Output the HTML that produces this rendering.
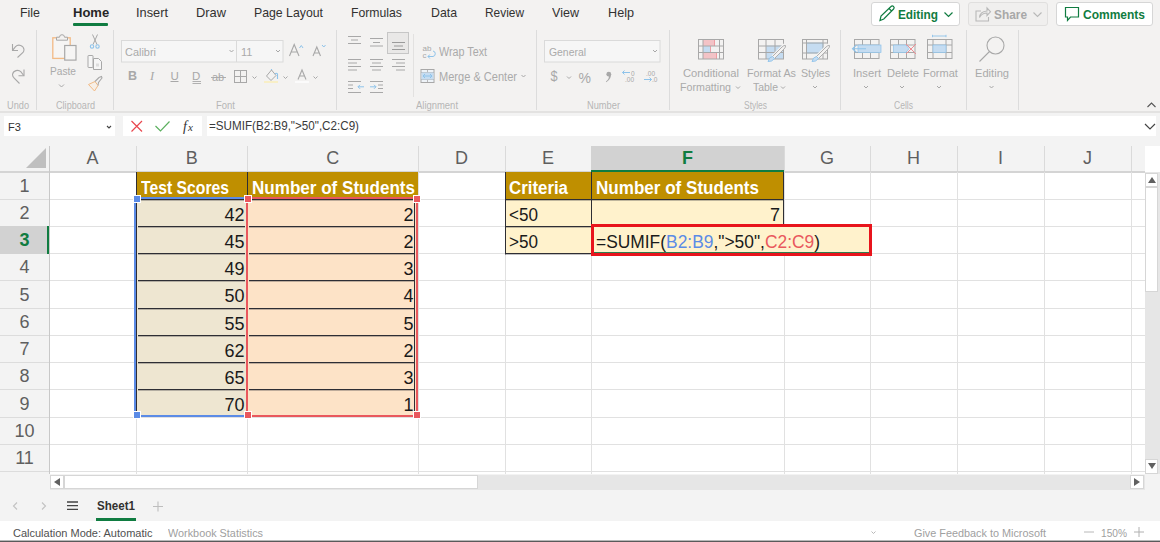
<!DOCTYPE html>
<html><head><meta charset="utf-8"><style>
html,body{margin:0;padding:0;width:1160px;height:542px;overflow:hidden;background:#fff;font-family:'Liberation Sans', sans-serif;}
#root{position:relative;width:1160px;height:542px;overflow:hidden;}
</style></head><body><div id="root">
<div style="position:absolute;left:0px;top:0px;width:1160px;height:113px;background:#f3f2f1"></div>
<div style="position:absolute;left:0px;top:111px;width:1160px;height:2px;background:#e3e2e1"></div>
<div style="position:absolute;left:0px;top:113px;width:1160px;height:33px;background:#f3f3f3"></div>
<div style="position:absolute;left:73px;top:23px;width:35px;height:3px;background:#107c41;border-radius:1px"></div>
<div style="position:absolute;left:36px;top:30px;width:1px;height:80px;background:#dcdcdc"></div>
<div style="position:absolute;left:113px;top:30px;width:1px;height:80px;background:#dcdcdc"></div>
<div style="position:absolute;left:336px;top:30px;width:1px;height:80px;background:#dcdcdc"></div>
<div style="position:absolute;left:536px;top:30px;width:1px;height:80px;background:#dcdcdc"></div>
<div style="position:absolute;left:669px;top:30px;width:1px;height:80px;background:#dcdcdc"></div>
<div style="position:absolute;left:840px;top:30px;width:1px;height:80px;background:#dcdcdc"></div>
<div style="position:absolute;left:966px;top:30px;width:1px;height:80px;background:#dcdcdc"></div>
<div style="position:absolute;left:1018px;top:30px;width:1px;height:80px;background:#dcdcdc"></div>
<div style="position:absolute;left:871px;top:2px;width:89px;height:24px;box-sizing:border-box;background:#fff;border:1px solid #d6d6d6;border-radius:3px"></div>
<div style="position:absolute;left:968px;top:2px;width:80px;height:24px;box-sizing:border-box;background:#f0efee;border:1px solid #e0dfde;border-radius:3px"></div>
<div style="position:absolute;left:1056px;top:2px;width:97px;height:24px;box-sizing:border-box;background:#fff;border:1px solid #d6d6d6;border-radius:3px"></div>
<div style="position:absolute;left:4px;top:116px;width:111px;height:20px;background:#fff"></div>
<div style="position:absolute;left:123px;top:116px;width:79px;height:20px;background:#fff"></div>
<div style="position:absolute;left:207px;top:116px;width:949px;height:20px;background:#fff"></div>
<div style="position:absolute;left:0px;top:146px;width:1145px;height:26px;background:#f3f3f3"></div>
<div style="position:absolute;left:0px;top:172px;width:49px;height:302px;background:#f3f3f3"></div>
<div style="position:absolute;left:50px;top:172px;width:1095px;height:302px;background:#fff"></div>
<div style="position:absolute;left:136px;top:146px;width:1px;height:26px;background:#dadada"></div>
<div style="position:absolute;left:247px;top:146px;width:1px;height:26px;background:#dadada"></div>
<div style="position:absolute;left:418px;top:146px;width:1px;height:26px;background:#dadada"></div>
<div style="position:absolute;left:505px;top:146px;width:1px;height:26px;background:#dadada"></div>
<div style="position:absolute;left:591px;top:146px;width:1px;height:26px;background:#dadada"></div>
<div style="position:absolute;left:784px;top:146px;width:1px;height:26px;background:#dadada"></div>
<div style="position:absolute;left:870px;top:146px;width:1px;height:26px;background:#dadada"></div>
<div style="position:absolute;left:957px;top:146px;width:1px;height:26px;background:#dadada"></div>
<div style="position:absolute;left:1044px;top:146px;width:1px;height:26px;background:#dadada"></div>
<div style="position:absolute;left:1131px;top:146px;width:1px;height:26px;background:#dadada"></div>
<div style="position:absolute;left:0px;top:171px;width:1145px;height:2px;background:#d4d4d4"></div>
<div style="position:absolute;left:49px;top:146px;width:1px;height:328px;background:#c8c8c8"></div>
<div style="position:absolute;left:136px;top:172px;width:1px;height:302px;background:#e1e1e1"></div>
<div style="position:absolute;left:247px;top:172px;width:1px;height:302px;background:#e1e1e1"></div>
<div style="position:absolute;left:418px;top:172px;width:1px;height:302px;background:#e1e1e1"></div>
<div style="position:absolute;left:505px;top:172px;width:1px;height:302px;background:#e1e1e1"></div>
<div style="position:absolute;left:591px;top:172px;width:1px;height:302px;background:#e1e1e1"></div>
<div style="position:absolute;left:784px;top:172px;width:1px;height:302px;background:#e1e1e1"></div>
<div style="position:absolute;left:870px;top:172px;width:1px;height:302px;background:#e1e1e1"></div>
<div style="position:absolute;left:957px;top:172px;width:1px;height:302px;background:#e1e1e1"></div>
<div style="position:absolute;left:1044px;top:172px;width:1px;height:302px;background:#e1e1e1"></div>
<div style="position:absolute;left:1131px;top:172px;width:1px;height:302px;background:#e1e1e1"></div>
<div style="position:absolute;left:50px;top:199px;width:1095px;height:1px;background:#e1e1e1"></div>
<div style="position:absolute;left:0px;top:199px;width:49px;height:1px;background:#dcdcdc"></div>
<div style="position:absolute;left:50px;top:226px;width:1095px;height:1px;background:#e1e1e1"></div>
<div style="position:absolute;left:0px;top:226px;width:49px;height:1px;background:#dcdcdc"></div>
<div style="position:absolute;left:50px;top:253px;width:1095px;height:1px;background:#e1e1e1"></div>
<div style="position:absolute;left:0px;top:253px;width:49px;height:1px;background:#dcdcdc"></div>
<div style="position:absolute;left:50px;top:280px;width:1095px;height:1px;background:#e1e1e1"></div>
<div style="position:absolute;left:0px;top:280px;width:49px;height:1px;background:#dcdcdc"></div>
<div style="position:absolute;left:50px;top:308px;width:1095px;height:1px;background:#e1e1e1"></div>
<div style="position:absolute;left:0px;top:308px;width:49px;height:1px;background:#dcdcdc"></div>
<div style="position:absolute;left:50px;top:335px;width:1095px;height:1px;background:#e1e1e1"></div>
<div style="position:absolute;left:0px;top:335px;width:49px;height:1px;background:#dcdcdc"></div>
<div style="position:absolute;left:50px;top:362px;width:1095px;height:1px;background:#e1e1e1"></div>
<div style="position:absolute;left:0px;top:362px;width:49px;height:1px;background:#dcdcdc"></div>
<div style="position:absolute;left:50px;top:389px;width:1095px;height:1px;background:#e1e1e1"></div>
<div style="position:absolute;left:0px;top:389px;width:49px;height:1px;background:#dcdcdc"></div>
<div style="position:absolute;left:50px;top:417px;width:1095px;height:1px;background:#e1e1e1"></div>
<div style="position:absolute;left:0px;top:417px;width:49px;height:1px;background:#dcdcdc"></div>
<div style="position:absolute;left:50px;top:444px;width:1095px;height:1px;background:#e1e1e1"></div>
<div style="position:absolute;left:0px;top:444px;width:49px;height:1px;background:#dcdcdc"></div>
<div style="position:absolute;left:50px;top:471px;width:1095px;height:1px;background:#e1e1e1"></div>
<div style="position:absolute;left:0px;top:471px;width:49px;height:1px;background:#dcdcdc"></div>
<div style="position:absolute;left:591px;top:146px;width:193px;height:25px;background:#d2d2d2"></div>
<div style="position:absolute;left:591px;top:170px;width:193px;height:2px;background:#107c41"></div>
<div style="position:absolute;left:0px;top:226px;width:49px;height:28px;background:#d2d2d2"></div>
<div style="position:absolute;left:47px;top:226px;width:2px;height:28px;background:#107c41"></div>
<svg style="position:absolute;left:26px;top:148px" width="21" height="21"><path d="M20 0 L20 20 L0 20 Z" fill="#bfbfbf"/></svg>
<div style="position:absolute;left:136px;top:172px;width:282px;height:27px;background:#bf8f00"></div>
<div style="position:absolute;left:505px;top:172px;width:279px;height:27px;background:#bf8f00"></div>
<div style="position:absolute;left:505px;top:199px;width:279px;height:55px;background:#fff2cc"></div>
<div style="position:absolute;left:137px;top:199px;width:110px;height:218px;background:#eee6d1"></div>
<div style="position:absolute;left:248px;top:199px;width:170px;height:218px;background:#fde3c7"></div>
<div style="position:absolute;left:136px;top:199px;width:282px;height:1px;background:#2e2e34;box-shadow:0 1px 0 rgba(46,46,52,0.3)"></div>
<div style="position:absolute;left:138px;top:226px;width:107px;height:1px;background:#2e2e34;box-shadow:0 1px 0 rgba(46,46,52,0.3)"></div>
<div style="position:absolute;left:249px;top:226px;width:166px;height:1px;background:#2e2e34;box-shadow:0 1px 0 rgba(46,46,52,0.3)"></div>
<div style="position:absolute;left:138px;top:253px;width:107px;height:1px;background:#2e2e34;box-shadow:0 1px 0 rgba(46,46,52,0.3)"></div>
<div style="position:absolute;left:249px;top:253px;width:166px;height:1px;background:#2e2e34;box-shadow:0 1px 0 rgba(46,46,52,0.3)"></div>
<div style="position:absolute;left:138px;top:280px;width:107px;height:1px;background:#2e2e34;box-shadow:0 1px 0 rgba(46,46,52,0.3)"></div>
<div style="position:absolute;left:249px;top:280px;width:166px;height:1px;background:#2e2e34;box-shadow:0 1px 0 rgba(46,46,52,0.3)"></div>
<div style="position:absolute;left:138px;top:308px;width:107px;height:1px;background:#2e2e34;box-shadow:0 1px 0 rgba(46,46,52,0.3)"></div>
<div style="position:absolute;left:249px;top:308px;width:166px;height:1px;background:#2e2e34;box-shadow:0 1px 0 rgba(46,46,52,0.3)"></div>
<div style="position:absolute;left:138px;top:335px;width:107px;height:1px;background:#2e2e34;box-shadow:0 1px 0 rgba(46,46,52,0.3)"></div>
<div style="position:absolute;left:249px;top:335px;width:166px;height:1px;background:#2e2e34;box-shadow:0 1px 0 rgba(46,46,52,0.3)"></div>
<div style="position:absolute;left:138px;top:362px;width:107px;height:1px;background:#2e2e34;box-shadow:0 1px 0 rgba(46,46,52,0.3)"></div>
<div style="position:absolute;left:249px;top:362px;width:166px;height:1px;background:#2e2e34;box-shadow:0 1px 0 rgba(46,46,52,0.3)"></div>
<div style="position:absolute;left:138px;top:389px;width:107px;height:1px;background:#2e2e34;box-shadow:0 1px 0 rgba(46,46,52,0.3)"></div>
<div style="position:absolute;left:249px;top:389px;width:166px;height:1px;background:#2e2e34;box-shadow:0 1px 0 rgba(46,46,52,0.3)"></div>
<div style="position:absolute;left:136px;top:172px;width:1px;height:245px;background:#2e2e34;box-shadow:0 1px 0 rgba(46,46,52,0.3)"></div>
<div style="position:absolute;left:247px;top:172px;width:1px;height:245px;background:#2e2e34;box-shadow:0 1px 0 rgba(46,46,52,0.3)"></div>
<div style="position:absolute;left:414px;top:199px;width:1px;height:218px;background:#2e2e34;box-shadow:0 1px 0 rgba(46,46,52,0.3)"></div>
<div style="position:absolute;left:505px;top:199px;width:279px;height:1px;background:#2e2e34;box-shadow:0 1px 0 rgba(46,46,52,0.3)"></div>
<div style="position:absolute;left:505px;top:226px;width:279px;height:1px;background:#2e2e34;box-shadow:0 1px 0 rgba(46,46,52,0.3)"></div>
<div style="position:absolute;left:505px;top:253px;width:86px;height:1px;background:#2e2e34;box-shadow:0 1px 0 rgba(46,46,52,0.3)"></div>
<div style="position:absolute;left:505px;top:172px;width:1px;height:82px;background:#2e2e34;box-shadow:0 1px 0 rgba(46,46,52,0.3)"></div>
<div style="position:absolute;left:591px;top:172px;width:1px;height:82px;background:#2e2e34;box-shadow:0 1px 0 rgba(46,46,52,0.3)"></div>
<div style="position:absolute;left:783px;top:172px;width:1px;height:52px;background:#2e2e34;box-shadow:0 1px 0 rgba(46,46,52,0.3)"></div>
<div style="position:absolute;left:591px;top:226px;width:279px;height:28px;background:#fff2cc"></div>
<div style="position:absolute;left:594px;top:252px;width:275px;height:1px;background:#2e7d4f"></div>
<div style="position:absolute;left:134px;top:197px;width:114px;height:2px;background:#5b8be6"></div>
<div style="position:absolute;left:134px;top:197px;width:2px;height:220px;background:#5b8be6"></div>
<div style="position:absolute;left:134px;top:415px;width:114px;height:2px;background:#5b8be6"></div>
<div style="position:absolute;left:246px;top:197px;width:172px;height:2px;background:#e9585d"></div>
<div style="position:absolute;left:246px;top:197px;width:2px;height:220px;background:#e9585d"></div>
<div style="position:absolute;left:416px;top:197px;width:2px;height:220px;background:#e9585d"></div>
<div style="position:absolute;left:246px;top:415px;width:172px;height:2px;background:#e9585d"></div>
<div style="position:absolute;left:132.5px;top:195px;width:8px;height:8px;box-sizing:border-box;background:#5b8be6;border:1px solid #fff"></div>
<div style="position:absolute;left:132.5px;top:411px;width:8px;height:8px;box-sizing:border-box;background:#5b8be6;border:1px solid #fff"></div>
<div style="position:absolute;left:243.5px;top:195px;width:8px;height:8px;box-sizing:border-box;background:#e9585d;border:1px solid #fff"></div>
<div style="position:absolute;left:412.5px;top:195px;width:8px;height:8px;box-sizing:border-box;background:#e9585d;border:1px solid #fff"></div>
<div style="position:absolute;left:243.5px;top:411px;width:8px;height:8px;box-sizing:border-box;background:#e9585d;border:1px solid #fff"></div>
<div style="position:absolute;left:412.5px;top:411px;width:8px;height:8px;box-sizing:border-box;background:#e9585d;border:1px solid #fff"></div>
<div style="position:absolute;left:591px;top:224px;width:281px;height:32px;box-sizing:border-box;border:3px solid #e8141c"></div>
<div style="position:absolute;left:1145px;top:172px;width:15px;height:302px;background:#e6e6e6"></div>
<div style="position:absolute;left:1145px;top:173px;width:13px;height:14px;box-sizing:border-box;background:#fff;border:1px solid #d6d6d6"></div>
<div style="position:absolute;left:1145px;top:187px;width:13px;height:105px;box-sizing:border-box;background:#fff;border:1px solid #d6d6d6"></div>
<div style="position:absolute;left:1145px;top:459px;width:13px;height:15px;box-sizing:border-box;background:#fff;border:1px solid #d6d6d6"></div>
<div style="position:absolute;left:0px;top:474px;width:1160px;height:47px;background:#f3f3f3"></div>
<div style="position:absolute;left:50px;top:475px;width:1095px;height:15px;background:#e6e6e6"></div>
<div style="position:absolute;left:50px;top:475px;width:14px;height:14px;box-sizing:border-box;background:#fff;border:1px solid #d6d6d6"></div>
<div style="position:absolute;left:64px;top:475px;width:414px;height:14px;box-sizing:border-box;background:#fff;border:1px solid #d6d6d6"></div>
<div style="position:absolute;left:1130px;top:475px;width:14px;height:14px;box-sizing:border-box;background:#fff;border:1px solid #d6d6d6"></div>
<svg style="position:absolute;left:1148px;top:176px" width="8" height="8"><path d="M0 7 L4 1 L8 7Z" fill="#606060"/></svg>
<svg style="position:absolute;left:1148px;top:462px" width="8" height="8"><path d="M0 1 L4 7 L8 1Z" fill="#606060"/></svg>
<svg style="position:absolute;left:53px;top:478px" width="8" height="8"><path d="M7 0 L1 4 L7 8Z" fill="#606060"/></svg>
<svg style="position:absolute;left:1133px;top:478px" width="8" height="8"><path d="M1 0 L7 4 L1 8Z" fill="#606060"/></svg>
<div style="position:absolute;left:96px;top:518px;width:40px;height:3px;background:#107c41"></div>
<div style="position:absolute;left:0px;top:521px;width:1160px;height:21px;background:#fff"></div>
<div style="position:absolute;left:0px;top:540px;width:1160px;height:1px;background:#b8b8b8"></div>
<div style="position:absolute;left:0px;top:541px;width:1160px;height:1px;background:#5a5a5a"></div>
<svg style="position:absolute;left:0;top:0" width="1160" height="113"><path d="M12.5 44 V50.5 H18" fill="none" stroke="#a8a8a8" stroke-width="1.1"/><path d="M12.8 50.2 L15.5 46.6 A5 5 0 0 1 24 49.5 A5 5 0 0 1 23 52.5 L17.5 57.5" fill="none" stroke="#a8a8a8" stroke-width="1.1"/><path d="M24 69.5 V75.8 H18.5" fill="none" stroke="#a8a8a8" stroke-width="1.1"/><path d="M23.7 75.5 L21 71.9 A5 5 0 0 0 12.5 74.5 A5 5 0 0 0 13.5 77.3 L19.5 83.5" fill="none" stroke="#a8a8a8" stroke-width="1.1"/><rect x="52.8" y="37.8" width="17.4" height="20.6" fill="#f6f5f4" stroke="#f2bb86" stroke-width="1.3"/><path d="M56.5 40.2 V37.2 H59.5 A2.5 2.5 0 0 1 64.5 37.2 H67.5 V40.2 Z" fill="#f3f2f1" stroke="#a8a8a8" stroke-width="1"/><rect x="64.7" y="45.5" width="11.3" height="14.6" fill="#f6f5f4" stroke="#a8a8a8" stroke-width="1.2"/><path d="M59 84.5 L61.5 87 L64 84.5" fill="none" stroke="#a8a8a8" stroke-width="1"/><path d="M92.5 34.5 L97 44.5 M97.5 34.5 L93 44.5" fill="none" stroke="#a8a8a8" stroke-width="1"/><circle cx="92" cy="46.5" r="1.7" fill="none" stroke="#8ec3ea" stroke-width="1.1"/><circle cx="97.5" cy="46.5" r="1.7" fill="none" stroke="#8ec3ea" stroke-width="1.1"/><rect x="88" y="55.5" width="5" height="12" rx="0.5" fill="#f6f6f6" stroke="#a8a8a8" stroke-width="1"/><path d="M93.5 58.5 H98.5 L101.5 61.5 V69.5 H93.5 Z" fill="#f6f6f6" stroke="#a8a8a8" stroke-width="1"/><rect x="96" y="63.5" width="3" height="3" fill="#dddddd"/><path d="M88.5 84.5 L95 81.5 L98 85.5 L94.5 91 Z" fill="#f7efe6" stroke="#f2bb86" stroke-width="1"/><path d="M95 81.5 L97 79.5 L99 77.5 L101.5 76.5 L102 78 L100 80.5 L98.5 82.5 L98 85.5" fill="none" stroke="#a8a8a8" stroke-width="1.1"/><rect x="121.5" y="40.5" width="161.5" height="21.5" fill="#f6f6f6" stroke="#dadada" stroke-width="1"/><line x1="236.5" y1="40.5" x2="236.5" y2="62" stroke="#dadada" stroke-width="1"/><path d="M229.5 50 L231.5 52 L233.5 50 M276 50 L278 52 L280 50" fill="none" stroke="#a8a8a8" stroke-width="1"/><path d="M289.5 56 L294.2 44.5 L299 56 M291.3 52 H297.2" fill="none" stroke="#a8a8a8" stroke-width="1.1"/><path d="M299.5 48 L301.3 45.5 L303 48" fill="none" stroke="#8ec3ea" stroke-width="1"/><path d="M313 56 L316.8 47 L320.5 56 M314.4 53 H319.2" fill="none" stroke="#a8a8a8" stroke-width="1.1"/><path d="M322 45 L323.8 47 L325.5 45" fill="none" stroke="#8ec3ea" stroke-width="1"/><text x="128" y="80" font-family="Liberation Sans" font-weight="bold" font-size="12.5" fill="#a8a8a8">B</text><text x="150" y="80" font-family="Liberation Serif" font-style="italic" font-size="12.5" fill="#a8a8a8">I</text><text x="170.5" y="79.5" font-family="Liberation Sans" font-size="11.5" fill="#a8a8a8">U</text><line x1="170.5" y1="81.5" x2="178.5" y2="81.5" stroke="#a8a8a8" stroke-width="1"/><text x="192" y="79.5" font-family="Liberation Sans" font-size="11.5" fill="#a8a8a8">D</text><path d="M192.5 81.5 H201 M192.5 83.5 H201" stroke="#a8a8a8" stroke-width="0.9"/><text x="212" y="80.5" font-family="Liberation Sans" font-size="11" fill="#a8a8a8">ab</text><line x1="211" y1="77.5" x2="226" y2="77.5" stroke="#a8a8a8" stroke-width="0.9"/><rect x="234.5" y="70.5" width="12" height="12" fill="none" stroke="#a8a8a8" stroke-width="1"/><path d="M240.5 70.5 V82.5 M234.5 76.5 H246.5" stroke="#a8a8a8" stroke-width="1"/><path d="M252.5 76.5 L254.5 78.5 L256.5 76.5" fill="none" stroke="#a8a8a8" stroke-width="1"/><path d="M283.5 76.5 L285.5 78.5 L287.5 76.5" fill="none" stroke="#a8a8a8" stroke-width="1"/><path d="M313.5 76.5 L315.5 78.5 L317.5 76.5" fill="none" stroke="#a8a8a8" stroke-width="1"/><path d="M266.5 76 L271.5 70 L276 75.5 L271 80.5 Z" fill="none" stroke="#a8a8a8" stroke-width="1"/><path d="M271.5 70 V69 M275 74 Q276.5 72.5 277.5 74 V79" fill="none" stroke="#8ec3ea" stroke-width="1.1"/><rect x="264" y="81" width="14" height="2" fill="#f8efc7"/><path d="M298 79.5 L302 70 L306 79.5 M299.5 76 H304.5" fill="none" stroke="#a8a8a8" stroke-width="1.1"/><rect x="295" y="81" width="14" height="2" fill="#fbfbfb"/><line x1="348" y1="36.5" x2="361" y2="36.5" stroke="#a8a8a8" stroke-width="1"/><line x1="351" y1="40" x2="358" y2="40" stroke="#a8a8a8" stroke-width="1"/><line x1="348" y1="43.5" x2="361" y2="43.5" stroke="#a8a8a8" stroke-width="1"/><line x1="370" y1="38.5" x2="383" y2="38.5" stroke="#a8a8a8" stroke-width="1"/><line x1="373" y1="42.5" x2="380" y2="42.5" stroke="#a8a8a8" stroke-width="1"/><line x1="370" y1="46" x2="383" y2="46" stroke="#a8a8a8" stroke-width="1"/><rect x="387.5" y="32.5" width="21" height="21" fill="#e9e8e7" stroke="#c6c6c6" stroke-width="1"/><line x1="392" y1="42.5" x2="405" y2="42.5" stroke="#9a9a9a" stroke-width="1"/><line x1="394" y1="46" x2="403" y2="46" stroke="#9a9a9a" stroke-width="1"/><line x1="392" y1="49.5" x2="405" y2="49.5" stroke="#9a9a9a" stroke-width="1"/><line x1="348" y1="59.5" x2="361" y2="59.5" stroke="#a8a8a8" stroke-width="1"/><line x1="348" y1="63" x2="357" y2="63" stroke="#a8a8a8" stroke-width="1"/><line x1="348" y1="66.5" x2="361" y2="66.5" stroke="#a8a8a8" stroke-width="1"/><line x1="348" y1="70" x2="357" y2="70" stroke="#a8a8a8" stroke-width="1"/><line x1="370" y1="59.5" x2="383" y2="59.5" stroke="#a8a8a8" stroke-width="1"/><line x1="372" y1="63" x2="381" y2="63" stroke="#a8a8a8" stroke-width="1"/><line x1="370" y1="66.5" x2="383" y2="66.5" stroke="#a8a8a8" stroke-width="1"/><line x1="372" y1="70" x2="381" y2="70" stroke="#a8a8a8" stroke-width="1"/><line x1="392" y1="59.5" x2="405" y2="59.5" stroke="#a8a8a8" stroke-width="1"/><line x1="396" y1="63" x2="405" y2="63" stroke="#a8a8a8" stroke-width="1"/><line x1="392" y1="66.5" x2="405" y2="66.5" stroke="#a8a8a8" stroke-width="1"/><line x1="396" y1="70" x2="405" y2="70" stroke="#a8a8a8" stroke-width="1"/><line x1="348" y1="81.5" x2="361" y2="81.5" stroke="#a8a8a8" stroke-width="1"/><line x1="348" y1="85" x2="353" y2="85" stroke="#a8a8a8" stroke-width="1"/><line x1="348" y1="88.5" x2="353" y2="88.5" stroke="#a8a8a8" stroke-width="1"/><line x1="348" y1="92.5" x2="361" y2="92.5" stroke="#a8a8a8" stroke-width="1"/><path d="M364 86.8 H358 M360 84.8 L358 86.8 L360 88.8" fill="none" stroke="#8ec3ea" stroke-width="1"/><line x1="370" y1="81.5" x2="383" y2="81.5" stroke="#a8a8a8" stroke-width="1"/><line x1="378" y1="85" x2="383" y2="85" stroke="#a8a8a8" stroke-width="1"/><line x1="378" y1="88.5" x2="383" y2="88.5" stroke="#a8a8a8" stroke-width="1"/><line x1="370" y1="92.5" x2="383" y2="92.5" stroke="#a8a8a8" stroke-width="1"/><path d="M370 86.8 H376 M374 84.8 L376 86.8 L374 88.8" fill="none" stroke="#8ec3ea" stroke-width="1"/><line x1="413.5" y1="34" x2="413.5" y2="97" stroke="#e2e1e0" stroke-width="1"/><text x="422.5" y="51" font-family="Liberation Sans" font-size="8" fill="#a8a8a8">ab</text><text x="422.5" y="57.5" font-family="Liberation Sans" font-size="8" fill="#a8a8a8">c</text><path d="M428 56.5 H433 A2.8 2.8 0 0 0 433 51 M429.8 54.5 L428 56.5 L429.8 58.5" fill="none" stroke="#8ec3ea" stroke-width="1"/><rect x="421" y="69.5" width="13" height="13" fill="#eef3f8" stroke="#a8a8a8" stroke-width="1"/><path d="M427.5 69.5 V72.5 M427.5 79.5 V82.5 M421 72.5 H434 M421 79.5 H434" stroke="#a8a8a8" stroke-width="0.8"/><rect x="421.5" y="72.5" width="12" height="7" fill="#c5dcf1"/><path d="M423 76 H432 M425 74 L423 76 L425 78 M430 74 L432 76 L430 78" fill="none" stroke="#8ec3ea" stroke-width="1"/><path d="M521.5 75 L523.5 77 L525.5 75" fill="none" stroke="#a8a8a8" stroke-width="1"/><rect x="544.5" y="40.5" width="115.5" height="21.5" fill="#f6f6f6" stroke="#dadada" stroke-width="1"/><path d="M653 50 L655 52 L657 50" fill="none" stroke="#a8a8a8" stroke-width="1"/><text x="550.5" y="81.5" font-family="Liberation Sans" font-size="15" fill="#a8a8a8" transform="translate(550.5 0) scale(0.85 1) translate(-550.5 0)">$</text><path d="M567 76.5 L569 78.5 L571 76.5" fill="none" stroke="#a8a8a8" stroke-width="1"/><text x="578.5" y="82.5" font-family="Liberation Sans" font-size="14" fill="#a8a8a8">%</text><circle cx="608.8" cy="74.2" r="2.4" fill="#a8a8a8"/><path d="M610.6 73.5 Q612 78.5 606.3 82.3 L605.9 81.6 Q609.2 78.8 608.8 76.4 Z" fill="#a8a8a8"/><text x="631" y="75.5" font-family="Liberation Sans" font-size="6.5" fill="#a8a8a8">0</text><text x="625" y="82" font-family="Liberation Sans" font-size="6.5" fill="#a8a8a8">.00</text><path d="M630 72.5 H622.5 M624.5 70.5 L622.5 72.5 L624.5 74.5" fill="none" stroke="#8ec3ea" stroke-width="1"/><text x="646" y="75.5" font-family="Liberation Sans" font-size="6.5" fill="#a8a8a8">.00</text><text x="652" y="82" font-family="Liberation Sans" font-size="6.5" fill="#a8a8a8">.0</text><path d="M644 79.5 H651.5 M649.5 77.5 L651.5 79.5 L649.5 81.5" fill="none" stroke="#8ec3ea" stroke-width="1"/><rect x="703" y="39.5" width="11.5" height="6.5" fill="#f3c3c6"/><rect x="703" y="46" width="7.5" height="6.5" fill="#c5dcf1"/><rect x="703" y="52.5" width="13.5" height="6.5" fill="#f3c3c6"/><path d="M714.5 39.5 V46 M710.5 46 V52.5 M716.5 52.5 V59" stroke="#ee8c92" stroke-width="0.8"/><rect x="698.5" y="39.5" width="25" height="19.5" fill="none" stroke="#a8a8a8" stroke-width="1"/><line x1="703" y1="39.5" x2="703" y2="59.0" stroke="#a8a8a8" stroke-width="1"/><line x1="719.5" y1="39.5" x2="719.5" y2="59.0" stroke="#a8a8a8" stroke-width="1"/><line x1="698.5" y1="46" x2="723.5" y2="46" stroke="#a8a8a8" stroke-width="1"/><line x1="698.5" y1="52.5" x2="723.5" y2="52.5" stroke="#a8a8a8" stroke-width="1"/><rect x="766" y="45.5" width="17.5" height="13.5" fill="#c5dcf1"/><rect x="758.5" y="39.5" width="25" height="19.5" fill="none" stroke="#a8a8a8" stroke-width="1"/><line x1="766" y1="39.5" x2="766" y2="59.0" stroke="#a8a8a8" stroke-width="1"/><line x1="775" y1="39.5" x2="775" y2="59.0" stroke="#a8a8a8" stroke-width="1"/><line x1="758.5" y1="46" x2="783.5" y2="46" stroke="#a8a8a8" stroke-width="1"/><line x1="758.5" y1="52.5" x2="783.5" y2="52.5" stroke="#a8a8a8" stroke-width="1"/><path d="M785 45 L773 57" stroke="#f3f2f1" stroke-width="4"/><path d="M785.5 45.5 Q786 47 784 49 L774.5 58.5 L772.5 56.5 L782 47 Q784 45 785.5 45.5Z" fill="#f3f2f1" stroke="#a8a8a8" stroke-width="0.9"/><path d="M772.5 56.5 Q769 57 768 61.5 Q772 62 774.5 58.5 Z" fill="#c5dcf1" stroke="#8ec3ea" stroke-width="0.9"/><rect x="806.5" y="43" width="16.5" height="10" fill="#c5dcf1" stroke="#8ec3ea" stroke-width="0.6"/><rect x="802.5" y="39.5" width="25" height="19.5" fill="none" stroke="#a8a8a8" stroke-width="1"/><line x1="806.5" y1="39.5" x2="806.5" y2="59.0" stroke="#a8a8a8" stroke-width="1"/><line x1="823" y1="39.5" x2="823" y2="59.0" stroke="#a8a8a8" stroke-width="1"/><line x1="802.5" y1="43" x2="827.5" y2="43" stroke="#a8a8a8" stroke-width="1"/><line x1="802.5" y1="53" x2="827.5" y2="53" stroke="#a8a8a8" stroke-width="1"/><path d="M829 45 L817 57" stroke="#f3f2f1" stroke-width="4"/><path d="M829.5 45.5 Q830 47 828 49 L818.5 58.5 L816.5 56.5 L826 47 Q828 45 829.5 45.5Z" fill="#f3f2f1" stroke="#a8a8a8" stroke-width="0.9"/><path d="M816.5 56.5 Q813 57 812 61.5 Q816 62 818.5 58.5 Z" fill="#c5dcf1" stroke="#8ec3ea" stroke-width="0.9"/><rect x="854.5" y="39.5" width="24.5" height="19" fill="none" stroke="#a8a8a8" stroke-width="1"/><line x1="862.5" y1="39.5" x2="862.5" y2="58.5" stroke="#a8a8a8" stroke-width="1"/><line x1="870.5" y1="39.5" x2="870.5" y2="58.5" stroke="#a8a8a8" stroke-width="1"/><line x1="854.5" y1="45" x2="879.0" y2="45" stroke="#a8a8a8" stroke-width="1"/><line x1="854.5" y1="52.5" x2="879.0" y2="52.5" stroke="#a8a8a8" stroke-width="1"/><rect x="858" y="45" width="23" height="7.5" fill="#c5dcf1" stroke="#8ec3ea" stroke-width="0.7"/><path d="M853 48.7 H866 M856.5 45 L852.5 48.7 L856.5 52.5" fill="none" stroke="#8ec3ea" stroke-width="1.1"/><rect x="890.5" y="39.5" width="24.5" height="19" fill="none" stroke="#a8a8a8" stroke-width="1"/><line x1="898.5" y1="39.5" x2="898.5" y2="58.5" stroke="#a8a8a8" stroke-width="1"/><line x1="906.5" y1="39.5" x2="906.5" y2="58.5" stroke="#a8a8a8" stroke-width="1"/><line x1="890.5" y1="45" x2="915.0" y2="45" stroke="#a8a8a8" stroke-width="1"/><line x1="890.5" y1="52.5" x2="915.0" y2="52.5" stroke="#a8a8a8" stroke-width="1"/><path d="M893.5 45 H906 L909 48.7 L906 52.5 H893.5 Z" fill="#c5dcf1" stroke="#8ec3ea" stroke-width="0.7"/><path d="M906 44 L916 54 M916 44 L906 54" stroke="#ee8c92" stroke-width="1"/><rect x="927.5" y="39.5" width="24.5" height="19" fill="none" stroke="#a8a8a8" stroke-width="1"/><line x1="933" y1="39.5" x2="933" y2="58.5" stroke="#a8a8a8" stroke-width="1"/><line x1="946" y1="39.5" x2="946" y2="58.5" stroke="#a8a8a8" stroke-width="1"/><line x1="927.5" y1="45" x2="952.0" y2="45" stroke="#a8a8a8" stroke-width="1"/><line x1="927.5" y1="52.5" x2="952.0" y2="52.5" stroke="#a8a8a8" stroke-width="1"/><rect x="933" y="45" width="13" height="7.5" fill="#c5dcf1" stroke="#8ec3ea" stroke-width="0.7"/><path d="M932.5 36 H946 M932.5 34.8 V37.2 M946 34.8 V37.2" stroke="#8ec3ea" stroke-width="0.9"/><circle cx="995.5" cy="45.5" r="8.5" fill="none" stroke="#a8a8a8" stroke-width="1.1"/><line x1="989.5" y1="51.5" x2="979.5" y2="61.5" stroke="#a8a8a8" stroke-width="1.1"/><path d="M736 86.5 L738 88.5 L740 86.5" fill="none" stroke="#a8a8a8" stroke-width="1"/><path d="M781 86.5 L783 88.5 L785 86.5" fill="none" stroke="#a8a8a8" stroke-width="1"/><path d="M813 86 L815 88 L817 86" fill="none" stroke="#a8a8a8" stroke-width="1"/><path d="M864 86 L866 88 L868 86" fill="none" stroke="#a8a8a8" stroke-width="1"/><path d="M900 86 L902 88 L904 86" fill="none" stroke="#a8a8a8" stroke-width="1"/><path d="M937 86 L939 88 L941 86" fill="none" stroke="#a8a8a8" stroke-width="1"/><path d="M989.5 86 L991.5 88 L993.5 86" fill="none" stroke="#a8a8a8" stroke-width="1"/><path d="M1147.5 107 L1151.5 103 L1155.5 107" fill="none" stroke="#555" stroke-width="1.1"/><path d="M880 20.5 L881 16 L891 6.5 A1.6 1.6 0 0 1 893.6 9 L883.8 19 Z M889 8.5 L891.8 11.2" fill="none" stroke="#107c41" stroke-width="1.2"/><path d="M944.5 12.5 L948.5 16.5 L952.5 12.5" fill="none" stroke="#107c41" stroke-width="1.2"/><path d="M981 11 H976 V21 H988.5 V17" fill="none" stroke="#b8b8b8" stroke-width="1.1"/><path d="M979.5 17.5 Q980 11.5 987 11 V8 L990.5 11.8 L987 15.5 V13 Q982 13 979.5 17.5Z" fill="none" stroke="#b8b8b8" stroke-width="1.1"/><path d="M1033.5 12.5 L1037.5 16.5 L1041.5 12.5" fill="none" stroke="#b8b8b8" stroke-width="1.1"/><path d="M1065.5 7.5 H1078.5 V17 H1070.5 L1067.5 20.5 V17 H1065.5 Z" fill="none" stroke="#107c41" stroke-width="1.2"/></svg>
<svg style="position:absolute;left:0;top:0" width="1160" height="542"><path d="M107 126 L109 128 L111 126" fill="none" stroke="#444" stroke-width="1.1"/><path d="M131.5 121 L142 131.5 M142 121 L131.5 131.5" stroke="#e9474e" stroke-width="1.2"/><path d="M155.5 126 L160.5 131 L169.5 121.5" fill="none" stroke="#5cb05f" stroke-width="1.2"/><text x="183" y="131" font-family="Liberation Serif" font-style="italic" font-size="14" fill="#333">f</text><text x="188" y="131" font-family="Liberation Serif" font-style="italic" font-size="11" fill="#333">x</text><path d="M1145 124 L1150 129 L1155 124" fill="none" stroke="#444" stroke-width="1.2"/><path d="M17 502.5 L13.5 506 L17 509.5" fill="none" stroke="#c2c2c2" stroke-width="1.1"/><path d="M42 502.5 L45.5 506 L42 509.5" fill="none" stroke="#c2c2c2" stroke-width="1.1"/><path d="M67 502 H78 M67 505.7 H78 M67 509.4 H78" stroke="#444" stroke-width="1.3"/><path d="M158 501.5 V511.5 M153 506.5 H163" stroke="#bdbdbd" stroke-width="1.1"/><path d="M871.5 531.5 L873.5 533.5 L875.5 531.5" fill="none" stroke="#b0b0b0" stroke-width="0.9"/><path d="M1084 532 H1094" stroke="#b8b8b8" stroke-width="1"/><path d="M1139 527 V537 M1134 532 H1144" stroke="#b0b0b0" stroke-width="1"/></svg>
<div style="position:absolute;left:20.00px;top:6.00px;font-family:'Liberation Sans', sans-serif;font-size:13px;font-weight:400;line-height:1;white-space:nowrap;color:#323130;transform:scaleX(0.9545);transform-origin:0 0;">File</div>
<div style="position:absolute;left:73.00px;top:6.00px;font-family:'Liberation Sans', sans-serif;font-size:13px;font-weight:700;line-height:1;white-space:nowrap;color:#262626;">Home</div>
<div style="position:absolute;left:136.00px;top:6.00px;font-family:'Liberation Sans', sans-serif;font-size:13px;font-weight:400;line-height:1;white-space:nowrap;color:#323130;transform:scaleX(0.9841);transform-origin:0 0;">Insert</div>
<div style="position:absolute;left:196.00px;top:6.00px;font-family:'Liberation Sans', sans-serif;font-size:13px;font-weight:400;line-height:1;white-space:nowrap;color:#323130;transform:scaleX(0.9887);transform-origin:0 0;">Draw</div>
<div style="position:absolute;left:254.00px;top:6.00px;font-family:'Liberation Sans', sans-serif;font-size:13px;font-weight:400;line-height:1;white-space:nowrap;color:#323130;transform:scaleX(0.9450);transform-origin:0 0;">Page Layout</div>
<div style="position:absolute;left:351.00px;top:6.00px;font-family:'Liberation Sans', sans-serif;font-size:13px;font-weight:400;line-height:1;white-space:nowrap;color:#323130;transform:scaleX(0.9412);transform-origin:0 0;">Formulas</div>
<div style="position:absolute;left:431.00px;top:6.00px;font-family:'Liberation Sans', sans-serif;font-size:13px;font-weight:400;line-height:1;white-space:nowrap;color:#323130;transform:scaleX(0.9465);transform-origin:0 0;">Data</div>
<div style="position:absolute;left:485.00px;top:6.00px;font-family:'Liberation Sans', sans-serif;font-size:13px;font-weight:400;line-height:1;white-space:nowrap;color:#323130;transform:scaleX(0.9150);transform-origin:0 0;">Review</div>
<div style="position:absolute;left:552.00px;top:6.00px;font-family:'Liberation Sans', sans-serif;font-size:13px;font-weight:400;line-height:1;white-space:nowrap;color:#323130;transform:scaleX(0.9659);transform-origin:0 0;">View</div>
<div style="position:absolute;left:608.00px;top:6.00px;font-family:'Liberation Sans', sans-serif;font-size:13px;font-weight:400;line-height:1;white-space:nowrap;color:#323130;transform:scaleX(0.9720);transform-origin:0 0;">Help</div>
<div style="position:absolute;left:898.00px;top:8.00px;font-family:'Liberation Sans', sans-serif;font-size:13px;font-weight:700;line-height:1;white-space:nowrap;color:#107c41;transform:scaleX(0.9081);transform-origin:0 0;">Editing</div>
<div style="position:absolute;left:994.00px;top:8.00px;font-family:'Liberation Sans', sans-serif;font-size:13px;font-weight:700;line-height:1;white-space:nowrap;color:#a8a8a8;transform:scaleX(0.9131);transform-origin:0 0;">Share</div>
<div style="position:absolute;left:1083.00px;top:8.00px;font-family:'Liberation Sans', sans-serif;font-size:13px;font-weight:700;line-height:1;white-space:nowrap;color:#107c41;transform:scaleX(0.9228);transform-origin:0 0;">Comments</div>
<div style="position:absolute;left:7.30px;top:100.53px;font-family:'Liberation Sans', sans-serif;font-size:10px;font-weight:400;line-height:1;white-space:nowrap;color:#b6b6b6;transform:scaleX(0.9203);transform-origin:0 0;">Undo</div>
<div style="position:absolute;left:55.50px;top:100.53px;font-family:'Liberation Sans', sans-serif;font-size:10px;font-weight:400;line-height:1;white-space:nowrap;color:#b6b6b6;transform:scaleX(0.9109);transform-origin:0 0;">Clipboard</div>
<div style="position:absolute;left:215.50px;top:100.53px;font-family:'Liberation Sans', sans-serif;font-size:10px;font-weight:400;line-height:1;white-space:nowrap;color:#b6b6b6;transform:scaleX(0.9493);transform-origin:0 0;">Font</div>
<div style="position:absolute;left:415.50px;top:100.53px;font-family:'Liberation Sans', sans-serif;font-size:10px;font-weight:400;line-height:1;white-space:nowrap;color:#b6b6b6;transform:scaleX(0.9445);transform-origin:0 0;">Alignment</div>
<div style="position:absolute;left:586.50px;top:100.53px;font-family:'Liberation Sans', sans-serif;font-size:10px;font-weight:400;line-height:1;white-space:nowrap;color:#b6b6b6;transform:scaleX(0.9275);transform-origin:0 0;">Number</div>
<div style="position:absolute;left:743.50px;top:100.53px;font-family:'Liberation Sans', sans-serif;font-size:10px;font-weight:400;line-height:1;white-space:nowrap;color:#b6b6b6;transform:scaleX(0.8445);transform-origin:0 0;">Styles</div>
<div style="position:absolute;left:893.50px;top:100.53px;font-family:'Liberation Sans', sans-serif;font-size:10px;font-weight:400;line-height:1;white-space:nowrap;color:#b6b6b6;transform:scaleX(0.8545);transform-origin:0 0;">Cells</div>
<div style="position:absolute;left:50.00px;top:65.99px;font-family:'Liberation Sans', sans-serif;font-size:11px;font-weight:400;line-height:1;white-space:nowrap;color:#aaaaaa;transform:scaleX(0.9239);transform-origin:0 0;">Paste</div>
<div style="position:absolute;left:125.00px;top:46.69px;font-family:'Liberation Sans', sans-serif;font-size:11px;font-weight:400;line-height:1;white-space:nowrap;color:#aaaaaa;transform:scaleX(0.9940);transform-origin:0 0;">Calibri</div>
<div style="position:absolute;left:241.00px;top:46.69px;font-family:'Liberation Sans', sans-serif;font-size:11px;font-weight:400;line-height:1;white-space:nowrap;color:#aaaaaa;">11</div>
<div style="position:absolute;left:549.00px;top:46.69px;font-family:'Liberation Sans', sans-serif;font-size:11px;font-weight:400;line-height:1;white-space:nowrap;color:#aaaaaa;transform:scaleX(0.9453);transform-origin:0 0;">General</div>
<div style="position:absolute;left:439.00px;top:46.34px;font-family:'Liberation Sans', sans-serif;font-size:12px;font-weight:400;line-height:1;white-space:nowrap;color:#aaaaaa;transform:scaleX(0.8959);transform-origin:0 0;">Wrap Text</div>
<div style="position:absolute;left:439.00px;top:71.34px;font-family:'Liberation Sans', sans-serif;font-size:12px;font-weight:400;line-height:1;white-space:nowrap;color:#aaaaaa;transform:scaleX(0.9209);transform-origin:0 0;">Merge &amp; Center</div>
<div style="position:absolute;left:683.00px;top:67.69px;font-family:'Liberation Sans', sans-serif;font-size:11px;font-weight:400;line-height:1;white-space:nowrap;color:#aaaaaa;transform:scaleX(1.0173);transform-origin:0 0;">Conditional</div>
<div style="position:absolute;left:680.00px;top:81.69px;font-family:'Liberation Sans', sans-serif;font-size:11px;font-weight:400;line-height:1;white-space:nowrap;color:#aaaaaa;transform:scaleX(0.9700);transform-origin:0 0;">Formatting</div>
<div style="position:absolute;left:747.00px;top:67.69px;font-family:'Liberation Sans', sans-serif;font-size:11px;font-weight:400;line-height:1;white-space:nowrap;color:#aaaaaa;transform:scaleX(0.9776);transform-origin:0 0;">Format As</div>
<div style="position:absolute;left:753.00px;top:81.69px;font-family:'Liberation Sans', sans-serif;font-size:11px;font-weight:400;line-height:1;white-space:nowrap;color:#aaaaaa;transform:scaleX(0.9507);transform-origin:0 0;">Table</div>
<div style="position:absolute;left:801.00px;top:67.69px;font-family:'Liberation Sans', sans-serif;font-size:11px;font-weight:400;line-height:1;white-space:nowrap;color:#aaaaaa;transform:scaleX(0.9677);transform-origin:0 0;">Styles</div>
<div style="position:absolute;left:853.00px;top:67.69px;font-family:'Liberation Sans', sans-serif;font-size:11px;font-weight:400;line-height:1;white-space:nowrap;color:#aaaaaa;transform:scaleX(1.0176);transform-origin:0 0;">Insert</div>
<div style="position:absolute;left:887.00px;top:67.69px;font-family:'Liberation Sans', sans-serif;font-size:11px;font-weight:400;line-height:1;white-space:nowrap;color:#aaaaaa;transform:scaleX(1.0064);transform-origin:0 0;">Delete</div>
<div style="position:absolute;left:923.00px;top:67.69px;font-family:'Liberation Sans', sans-serif;font-size:11px;font-weight:400;line-height:1;white-space:nowrap;color:#aaaaaa;">Format</div>
<div style="position:absolute;left:975.00px;top:67.69px;font-family:'Liberation Sans', sans-serif;font-size:11px;font-weight:400;line-height:1;white-space:nowrap;color:#aaaaaa;transform:scaleX(1.0107);transform-origin:0 0;">Editing</div>
<div style="position:absolute;left:8.00px;top:121.69px;font-family:'Liberation Sans', sans-serif;font-size:11px;font-weight:400;line-height:1;white-space:nowrap;color:#323130;">F3</div>
<div style="position:absolute;left:209.00px;top:119.84px;font-family:'Liberation Sans', sans-serif;font-size:12px;font-weight:400;line-height:1;white-space:nowrap;color:#3a3a3a;transform:scaleX(0.9704);transform-origin:0 0;">=SUMIF(B2:B9,"&gt;50",C2:C9)</div>
<div style="position:absolute;left:86.49px;top:149.26px;font-family:'Liberation Sans', sans-serif;font-size:18px;font-weight:400;line-height:1;white-space:nowrap;color:#5f5f5f;">A</div>
<div style="position:absolute;left:185.79px;top:149.26px;font-family:'Liberation Sans', sans-serif;font-size:18px;font-weight:400;line-height:1;white-space:nowrap;color:#5f5f5f;">B</div>
<div style="position:absolute;left:326.30px;top:149.26px;font-family:'Liberation Sans', sans-serif;font-size:18px;font-weight:400;line-height:1;white-space:nowrap;color:#5f5f5f;">C</div>
<div style="position:absolute;left:455.00px;top:149.26px;font-family:'Liberation Sans', sans-serif;font-size:18px;font-weight:400;line-height:1;white-space:nowrap;color:#5f5f5f;">D</div>
<div style="position:absolute;left:541.99px;top:149.26px;font-family:'Liberation Sans', sans-serif;font-size:18px;font-weight:400;line-height:1;white-space:nowrap;color:#5f5f5f;">E</div>
<div style="position:absolute;left:682.00px;top:149.26px;font-family:'Liberation Sans', sans-serif;font-size:18px;font-weight:700;line-height:1;white-space:nowrap;color:#107c41;">F</div>
<div style="position:absolute;left:819.99px;top:149.26px;font-family:'Liberation Sans', sans-serif;font-size:18px;font-weight:400;line-height:1;white-space:nowrap;color:#5f5f5f;">G</div>
<div style="position:absolute;left:907.00px;top:149.26px;font-family:'Liberation Sans', sans-serif;font-size:18px;font-weight:400;line-height:1;white-space:nowrap;color:#5f5f5f;">H</div>
<div style="position:absolute;left:997.99px;top:149.26px;font-family:'Liberation Sans', sans-serif;font-size:18px;font-weight:400;line-height:1;white-space:nowrap;color:#5f5f5f;">I</div>
<div style="position:absolute;left:1083.00px;top:149.26px;font-family:'Liberation Sans', sans-serif;font-size:18px;font-weight:400;line-height:1;white-space:nowrap;color:#5f5f5f;">J</div>
<div style="position:absolute;left:19.49px;top:176.74px;font-family:'Liberation Sans', sans-serif;font-size:18px;font-weight:400;line-height:1;white-space:nowrap;color:#5f5f5f;">1</div>
<div style="position:absolute;left:19.49px;top:203.99px;font-family:'Liberation Sans', sans-serif;font-size:18px;font-weight:400;line-height:1;white-space:nowrap;color:#5f5f5f;">2</div>
<div style="position:absolute;left:19.49px;top:231.24px;font-family:'Liberation Sans', sans-serif;font-size:18px;font-weight:700;line-height:1;white-space:nowrap;color:#107c41;">3</div>
<div style="position:absolute;left:19.49px;top:258.49px;font-family:'Liberation Sans', sans-serif;font-size:18px;font-weight:400;line-height:1;white-space:nowrap;color:#5f5f5f;">4</div>
<div style="position:absolute;left:19.49px;top:285.74px;font-family:'Liberation Sans', sans-serif;font-size:18px;font-weight:400;line-height:1;white-space:nowrap;color:#5f5f5f;">5</div>
<div style="position:absolute;left:19.49px;top:312.99px;font-family:'Liberation Sans', sans-serif;font-size:18px;font-weight:400;line-height:1;white-space:nowrap;color:#5f5f5f;">6</div>
<div style="position:absolute;left:19.49px;top:340.24px;font-family:'Liberation Sans', sans-serif;font-size:18px;font-weight:400;line-height:1;white-space:nowrap;color:#5f5f5f;">7</div>
<div style="position:absolute;left:19.49px;top:367.49px;font-family:'Liberation Sans', sans-serif;font-size:18px;font-weight:400;line-height:1;white-space:nowrap;color:#5f5f5f;">8</div>
<div style="position:absolute;left:19.49px;top:394.74px;font-family:'Liberation Sans', sans-serif;font-size:18px;font-weight:400;line-height:1;white-space:nowrap;color:#5f5f5f;">9</div>
<div style="position:absolute;left:14.48px;top:421.99px;font-family:'Liberation Sans', sans-serif;font-size:18px;font-weight:400;line-height:1;white-space:nowrap;color:#5f5f5f;">10</div>
<div style="position:absolute;left:15.16px;top:449.24px;font-family:'Liberation Sans', sans-serif;font-size:18px;font-weight:400;line-height:1;white-space:nowrap;color:#5f5f5f;">11</div>
<div style="position:absolute;left:141.00px;top:179.06px;font-family:'Liberation Sans', sans-serif;font-size:18px;font-weight:700;line-height:1;white-space:nowrap;color:#fff;transform:scaleX(0.8737);transform-origin:0 0;">Test Scores</div>
<div style="position:absolute;left:252.00px;top:179.06px;font-family:'Liberation Sans', sans-serif;font-size:18px;font-weight:700;line-height:1;white-space:nowrap;color:#fff;transform:scaleX(0.9476);transform-origin:0 0;">Number of Students</div>
<div style="position:absolute;left:509.00px;top:179.06px;font-family:'Liberation Sans', sans-serif;font-size:18px;font-weight:700;line-height:1;white-space:nowrap;color:#fff;transform:scaleX(0.9360);transform-origin:0 0;">Criteria</div>
<div style="position:absolute;left:596.00px;top:179.06px;font-family:'Liberation Sans', sans-serif;font-size:18px;font-weight:700;line-height:1;white-space:nowrap;color:#fff;transform:scaleX(0.9476);transform-origin:0 0;">Number of Students</div>
<div style="position:absolute;left:224.47px;top:205.61px;font-family:'Liberation Sans', sans-serif;font-size:18px;font-weight:400;line-height:1;white-space:nowrap;color:#1a1a1a;">42</div>
<div style="position:absolute;left:403.48px;top:205.61px;font-family:'Liberation Sans', sans-serif;font-size:18px;font-weight:400;line-height:1;white-space:nowrap;color:#1a1a1a;">2</div>
<div style="position:absolute;left:224.47px;top:232.86px;font-family:'Liberation Sans', sans-serif;font-size:18px;font-weight:400;line-height:1;white-space:nowrap;color:#1a1a1a;">45</div>
<div style="position:absolute;left:403.48px;top:232.86px;font-family:'Liberation Sans', sans-serif;font-size:18px;font-weight:400;line-height:1;white-space:nowrap;color:#1a1a1a;">2</div>
<div style="position:absolute;left:224.47px;top:260.11px;font-family:'Liberation Sans', sans-serif;font-size:18px;font-weight:400;line-height:1;white-space:nowrap;color:#1a1a1a;">49</div>
<div style="position:absolute;left:403.48px;top:260.11px;font-family:'Liberation Sans', sans-serif;font-size:18px;font-weight:400;line-height:1;white-space:nowrap;color:#1a1a1a;">3</div>
<div style="position:absolute;left:224.47px;top:287.36px;font-family:'Liberation Sans', sans-serif;font-size:18px;font-weight:400;line-height:1;white-space:nowrap;color:#1a1a1a;">50</div>
<div style="position:absolute;left:403.48px;top:287.36px;font-family:'Liberation Sans', sans-serif;font-size:18px;font-weight:400;line-height:1;white-space:nowrap;color:#1a1a1a;">4</div>
<div style="position:absolute;left:224.47px;top:314.61px;font-family:'Liberation Sans', sans-serif;font-size:18px;font-weight:400;line-height:1;white-space:nowrap;color:#1a1a1a;">55</div>
<div style="position:absolute;left:403.48px;top:314.61px;font-family:'Liberation Sans', sans-serif;font-size:18px;font-weight:400;line-height:1;white-space:nowrap;color:#1a1a1a;">5</div>
<div style="position:absolute;left:224.47px;top:341.86px;font-family:'Liberation Sans', sans-serif;font-size:18px;font-weight:400;line-height:1;white-space:nowrap;color:#1a1a1a;">62</div>
<div style="position:absolute;left:403.48px;top:341.86px;font-family:'Liberation Sans', sans-serif;font-size:18px;font-weight:400;line-height:1;white-space:nowrap;color:#1a1a1a;">2</div>
<div style="position:absolute;left:224.47px;top:369.11px;font-family:'Liberation Sans', sans-serif;font-size:18px;font-weight:400;line-height:1;white-space:nowrap;color:#1a1a1a;">65</div>
<div style="position:absolute;left:403.48px;top:369.11px;font-family:'Liberation Sans', sans-serif;font-size:18px;font-weight:400;line-height:1;white-space:nowrap;color:#1a1a1a;">3</div>
<div style="position:absolute;left:224.47px;top:396.36px;font-family:'Liberation Sans', sans-serif;font-size:18px;font-weight:400;line-height:1;white-space:nowrap;color:#1a1a1a;">70</div>
<div style="position:absolute;left:403.48px;top:396.36px;font-family:'Liberation Sans', sans-serif;font-size:18px;font-weight:400;line-height:1;white-space:nowrap;color:#1a1a1a;">1</div>
<div style="position:absolute;left:509.00px;top:205.61px;font-family:'Liberation Sans', sans-serif;font-size:18px;font-weight:400;line-height:1;white-space:nowrap;color:#1a1a1a;transform:scaleX(0.9494);transform-origin:0 0;">&lt;50</div>
<div style="position:absolute;left:509.00px;top:232.86px;font-family:'Liberation Sans', sans-serif;font-size:18px;font-weight:400;line-height:1;white-space:nowrap;color:#1a1a1a;transform:scaleX(0.9494);transform-origin:0 0;">&gt;50</div>
<div style="position:absolute;left:769.98px;top:205.61px;font-family:'Liberation Sans', sans-serif;font-size:18px;font-weight:400;line-height:1;white-space:nowrap;color:#1a1a1a;">7</div>
<div style="position:absolute;left:596.00px;top:232.86px;font-family:'Liberation Sans', sans-serif;font-size:18px;font-weight:400;line-height:1;white-space:nowrap;color:#1a1a1a;transform:scaleX(0.9658);transform-origin:0 0;">=SUMIF(<span style="color:#5b8be6">B2:B9</span>,"&gt;50",<span style="color:#e9585d">C2:C9</span>)</div>
<div style="position:absolute;left:97.00px;top:498.50px;font-family:'Liberation Sans', sans-serif;font-size:13px;font-weight:700;line-height:1;white-space:nowrap;color:#323130;transform:scaleX(0.8912);transform-origin:0 0;">Sheet1</div>
<div style="position:absolute;left:13.00px;top:528.19px;font-family:'Liberation Sans', sans-serif;font-size:11px;font-weight:400;line-height:1;white-space:nowrap;color:#505050;">Calculation Mode: Automatic</div>
<div style="position:absolute;left:168.00px;top:528.19px;font-family:'Liberation Sans', sans-serif;font-size:11px;font-weight:400;line-height:1;white-space:nowrap;color:#a0a0a0;transform:scaleX(0.9856);transform-origin:0 0;">Workbook Statistics</div>
<div style="position:absolute;left:914.00px;top:528.19px;font-family:'Liberation Sans', sans-serif;font-size:11px;font-weight:400;line-height:1;white-space:nowrap;color:#a0a0a0;transform:scaleX(0.9859);transform-origin:0 0;">Give Feedback to Microsoft</div>
<div style="position:absolute;left:1101.00px;top:528.19px;font-family:'Liberation Sans', sans-serif;font-size:11px;font-weight:400;line-height:1;white-space:nowrap;color:#a0a0a0;transform:scaleX(0.9239);transform-origin:0 0;">150%</div>
</div></body></html>
